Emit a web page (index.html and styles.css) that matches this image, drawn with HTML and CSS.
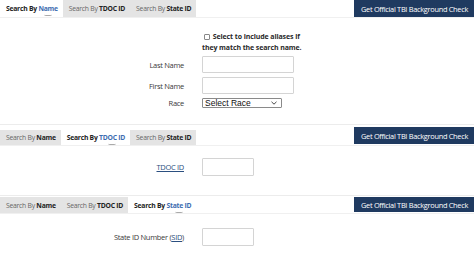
FILE: index.html
```html
<!DOCTYPE html>
<html lang="en">
<head>
    <meta charset="UTF-8">
    <meta name="viewport" content="width=device-width, initial-scale=1.0">
    <title>Offender Search</title>
    <link rel="stylesheet" href="styles.css">
</head>
<body>
    <!-- Search by name -->
    <div class="panel panel-name">
        <div class="tab-bar">
            <div class="tabs">
                <a href="#" class="tab active">Search By <span class="tab-key">Name</span></a>
                <a href="#" class="tab">Search By <span class="tab-key">TDOC ID</span></a>
                <a href="#" class="tab">Search By <span class="tab-key">State ID</span></a>
            </div>
            <a href="#" class="tbi-button">Get Official TBI Background Check</a>
        </div>
        <form class="search-form">
            <span></span>
            <label class="alias-check"><input type="checkbox"> Select to include aliases if they match the search name.</label>

            <label for="last-name" class="field-label">Last Name</label>
            <input type="text" id="last-name" class="text-input">

            <label for="first-name" class="field-label">First Name</label>
            <input type="text" id="first-name" class="text-input">

            <label for="race" class="field-label">Race</label>
            <select id="race" class="race-select">
                <option>Select Race</option>
                <option>Asian</option>
                <option>Black</option>
                <option>White</option>
            </select>
        </form>
    </div>

    <!-- Search by TDOC ID -->
    <div class="panel panel-tdoc">
        <div class="tab-bar">
            <div class="tabs">
                <a href="#" class="tab">Search By <span class="tab-key">Name</span></a>
                <a href="#" class="tab active">Search By <span class="tab-key">TDOC ID</span></a>
                <a href="#" class="tab">Search By <span class="tab-key">State ID</span></a>
            </div>
            <a href="#" class="tbi-button">Get Official TBI Background Check</a>
        </div>
        <form class="search-form">
            <label for="tdoc-id" class="field-label"><a href="#" class="help-link">TDOC ID</a></label>
            <input type="text" id="tdoc-id" class="text-input short">
        </form>
    </div>

    <!-- Search by State ID -->
    <div class="panel panel-state">
        <div class="tab-bar">
            <div class="tabs">
                <a href="#" class="tab">Search By <span class="tab-key">Name</span></a>
                <a href="#" class="tab">Search By <span class="tab-key">TDOC ID</span></a>
                <a href="#" class="tab active">Search By <span class="tab-key">State ID</span></a>
            </div>
            <a href="#" class="tbi-button">Get Official TBI Background Check</a>
        </div>
        <form class="search-form">
            <label for="sid" class="field-label">State ID Number (<a href="#" class="help-link">SID</a>)</label>
            <input type="text" id="sid" class="text-input short" autofocus>
        </form>
    </div>
</body>
</html>
```

FILE: styles.css
```css
* {
    margin: 0;
    padding: 0;
    box-sizing: border-box;
}

body {
    font-family: 'Open Sans', 'DejaVu Sans', sans-serif;
    background: white;
    color: #333;
    overflow: hidden;
}

.panel {
    border-top: 1px solid #ececec;
}

.panel-name {
    border-top: none;
    height: 124px;
}

.panel-tdoc {
    height: 71px;
}

.tab-bar {
    display: flex;
    justify-content: space-between;
    border-bottom: 1px solid #f0f0f0;
}

.panel-name .tab-bar {
    height: 18px;
}

.panel-tdoc .tab-bar {
    margin-top: 2px;
    height: 19px;
}

.panel-state .tab-bar {
    margin-top: 1px;
    height: 17px;
}

.tabs {
    display: flex;
    align-self: flex-end;
    height: 100%;
}

.panel-tdoc .tabs {
    height: 15px;
}

.panel-state .tabs {
    height: 16px;
}

.tab {
    display: flex;
    align-items: center;
    padding: 0 5px 0 6px;
    background: #e4e4e4;
    color: #666;
    font-size: 6.8px;
    letter-spacing: -0.25px;
    text-decoration: none;
    white-space: pre;
}

.tab-key {
    color: #222;
    font-weight: 700;
}

.tab.active {
    background: white;
    color: #222;
    font-weight: 700;
}

.tab.active .tab-key {
    position: relative;
    color: #3d6cb0;
}

.tab.active .tab-key::after {
    content: '';
    position: absolute;
    left: 50%;
    bottom: -3px;
    width: 8px;
    height: 2px;
    margin-left: -4px;
    border-bottom: 1px solid #aaa;
    border-radius: 0 0 50% 50%;
}

.tbi-button {
    display: flex;
    align-items: center;
    align-self: flex-start;
    height: 17px;
    padding: 0 6px 0 7px;
    background: #1f3a60;
    color: white;
    font-size: 7.4px;
    letter-spacing: -0.3px;
    text-decoration: none;
    white-space: nowrap;
}

.panel-state .tbi-button {
    height: 15px;
}

.search-form {
    display: grid;
    grid-template-columns: 184px auto;
    column-gap: 18px;
    row-gap: 4px;
    align-items: center;
    justify-items: start;
}

.panel-name .search-form {
    padding-top: 13px;
}

.panel-tdoc .search-form {
    padding-top: 12px;
}

.panel-state .search-form {
    padding-top: 14px;
}

.field-label {
    justify-self: end;
    font-size: 7.5px;
    letter-spacing: -0.3px;
    color: #3a3a3a;
}

.alias-check {
    width: 104px;
    margin-bottom: -1px;
    font-size: 7px;
    font-weight: 700;
    letter-spacing: -0.1px;
    line-height: 11px;
    color: #2a2a2a;
}

.alias-check input {
    appearance: none;
    width: 6px;
    height: 6px;
    margin: 0 1px 0 2px;
    border: 1px solid #888;
    border-radius: 1px;
    background: white;
    vertical-align: -0.5px;
}

.text-input {
    width: 92px;
    height: 17px;
    border: 1px solid #d4d4d4;
    border-radius: 1px;
    background: white;
    font-size: 8px;
    padding: 0 3px;
    outline: none;
    caret-color: #222;
}

.text-input.short {
    width: 52px;
    height: 18px;
}

.race-select {
    appearance: none;
    width: 80px;
    height: 10px;
    padding: 0 0 0 2px;
    font-family: 'Liberation Sans', Arial, sans-serif;
    font-size: 8.5px;
    line-height: 8px;
    border: 1px solid #8a8a8a;
    border-radius: 1px;
    background: white url("data:image/svg+xml,%3Csvg xmlns='http://www.w3.org/2000/svg' width='6' height='4' viewBox='0 0 6 4'%3E%3Cpath d='M0.5 0.8 L3 3.2 L5.5 0.8' fill='none' stroke='%23333' stroke-width='0.9'/%3E%3C/svg%3E") no-repeat right 4px center;
    color: #111;
}

.help-link {
    color: #2b4f80;
    text-decoration: underline;
}
```
